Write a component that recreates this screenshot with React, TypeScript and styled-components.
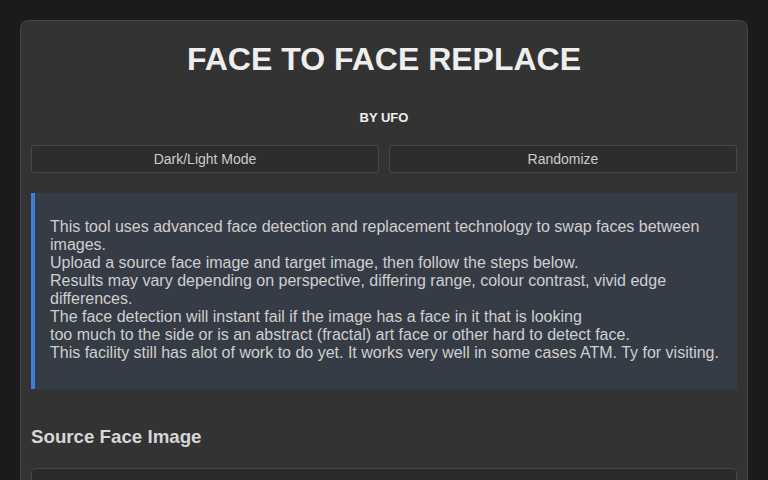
import React from "react";
import styled, { createGlobalStyle } from "styled-components";

const Global = createGlobalStyle`
  html, body {
    margin: 0;
    padding: 0;
    background: #1b1b1b;
  }
  body {
    padding: 20px;
    font-family: "Liberation Sans", Arial, sans-serif;
    color: #cccccc;
  }
  * { box-sizing: border-box; }
`;

const Container = styled.div`
  background: #333333;
  border: 1px solid #464646;
  border-radius: 8px;
  padding: 10px 10px 20px;
  display: flex;
  flex-direction: column;
`;

const Title = styled.h1`
  margin: 10px 0 0;
  font-size: 32px;
  font-weight: bold;
  text-align: center;
  color: #eeeeee;
  line-height: normal;
`;

const Byline = styled.div`
  margin-top: 32px;
  font-size: 13px;
  font-weight: bold;
  text-align: center;
  color: #eeeeee;
  line-height: normal;
`;

const ButtonRow = styled.div`
  margin-top: 20px;
  display: grid;
  grid-template-columns: 1fr 1fr;
  gap: 10px;
`;

const Button = styled.button`
  font-family: "Liberation Sans", Arial, sans-serif;
  font-size: 14px;
  line-height: 16px;
  padding: 5px 10px;
  color: #cccccc;
  background: #2d2d2d;
  border: 1px solid #474747;
  border-radius: 3px;
  cursor: pointer;
`;

const Info = styled.div`
  margin-top: 20px;
  background: #363c46;
  border-left: 4px solid #3d7ddb;
  padding: 25px 15px 27px;
  font-size: 16px;
  line-height: 18px;
  color: #cfcfcf;
`;

const InfoText = styled.p`
  margin: 0;
`;

const SectionTitle = styled.h3`
  margin: 37px 0 0;
  font-size: 18.72px;
  font-weight: bold;
  color: #d6d6d6;
  line-height: normal;
`;

const DropZone = styled.div`
  margin-top: 20px;
  height: 160px;
  background: #2b2b2b;
  border: 1px solid #474747;
  border-radius: 4px;
`;

export default function App() {
  return (
    <>
      <Global />
      <Container>
        <Title>FACE TO FACE REPLACE</Title>
        <Byline>BY UFO</Byline>
        <ButtonRow>
          <Button>Dark/Light Mode</Button>
          <Button>Randomize</Button>
        </ButtonRow>
        <Info>
          <InfoText>
            This tool uses advanced face detection and replacement technology to swap faces between images.
            <br />
            Upload a source face image and target image, then follow the steps below.
            <br />
            Results may vary depending on perspective, differing range, colour contrast, vivid edge differences.
            <br />
            The face detection will instant fail if the image has a face in it that is looking
            <br />
            too much to the side or is an abstract (fractal) art face or other hard to detect face.
            <br />
            This facility still has alot of work to do yet. It works very well in some cases ATM. Ty for visiting.
          </InfoText>
        </Info>
        <SectionTitle>Source Face Image</SectionTitle>
        <DropZone />
      </Container>
    </>
  );
}
